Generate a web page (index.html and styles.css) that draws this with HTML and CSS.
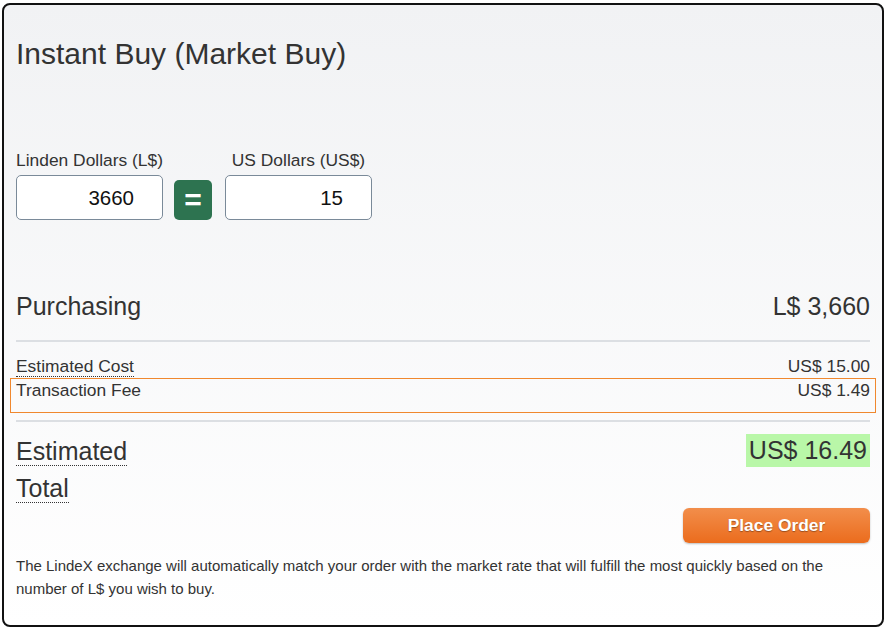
FILE: index.html
```html
<!DOCTYPE html>
<html lang="en">
<head>
  <meta charset="UTF-8">
  <title>Instant Buy</title>
  <meta name="viewport" content="width=device-width, initial-scale=1.0">
  <link rel="stylesheet" href="styles.css">
</head>
<body>
  <div class="panel">
    <h1 class="title">Instant Buy (Market Buy)</h1>

    <div class="converter">
      <div class="field">
        <label for="linden">Linden Dollars (L$)</label>
        <input id="linden" type="text" value="3660">
      </div>
      <button class="equals">=</button>
      <div class="field">
        <label for="usd">US Dollars (US$)</label>
        <input id="usd" type="text" value="15">
      </div>
    </div>

    <div class="row big">
      <span>Purchasing</span>
      <span>L$ 3,660</span>
    </div>
    <hr class="divider">

    <div class="row">
      <span class="hint">Estimated Cost</span>
      <span>US$ 15.00</span>
    </div>
    <div class="row fee">
      <span>Transaction Fee</span>
      <span>US$ 1.49</span>
    </div>
    <hr class="divider">

    <div class="row big total-row">
      <span class="total-label"><span class="hint">Estimated</span><br><span class="hint">Total</span></span>
      <span class="total-value">US$ 16.49</span>
    </div>

    <div class="actions">
      <button class="place-order">Place Order</button>
    </div>

    <p class="note">The LindeX exchange will automatically match your order with the market rate that will fulfill the most quickly based on the number of L$ you wish to buy.</p>
  </div>
</body>
</html>
```

FILE: styles.css
```css
body {
  margin: 0;
  font-family: "Liberation Sans", Arial, sans-serif;
  color: #333;
  background: #fff;
}

.panel {
  box-sizing: border-box;
  width: 882px;
  height: 624px;
  margin: 3px 0 0 2px;
  padding: 0 12px;
  border: 2px solid #111;
  border-radius: 8px;
  background: linear-gradient(#f1f2f4, #ffffff);
}

.title {
  margin: 0;
  padding-top: 30px;
  font-size: 30px;
  font-weight: normal;
  line-height: 38px;
}

.converter {
  display: flex;
  align-items: flex-end;
  gap: 11px;
  margin-top: 78px;
}

.field {
  display: flex;
  flex-direction: column;
  align-items: center;
}

.field label {
  font-size: 17.4px;
  line-height: 18px;
  margin-bottom: 6px;
  white-space: nowrap;
}

.field input {
  box-sizing: border-box;
  width: 147px;
  height: 45px;
  padding: 0 28px 0 8px;
  border: 1px solid #7a8a99;
  border-radius: 5px;
  background: #fff;
  font-family: "Liberation Sans", Arial, sans-serif;
  font-size: 20.5px;
  color: #111;
  text-align: right;
}

.equals {
  width: 38px;
  height: 40px;
  padding: 0;
  border: none;
  border-radius: 5px;
  background: #2d7350;
  color: #fff;
  font-family: "Liberation Sans", Arial, sans-serif;
  font-size: 30px;
  font-weight: bold;
  line-height: 40px;
}

.equals + .field {
  margin-left: 2px;
}

.row {
  display: flex;
  justify-content: space-between;
  font-size: 17.4px;
  line-height: 20px;
}

.row.big {
  font-size: 25px;
  line-height: 30px;
  margin-top: 71px;
}

.divider {
  height: 2px;
  margin: 19px 0 14px;
  border: none;
  background: #dcdfe3;
}

.hint {
  border-bottom: 1px dotted #333;
}

.fee {
  margin: 1px -6px 0;
  padding: 1px 5px 12px;
  border: 1px solid #f0882e;
}

.fee + .divider {
  margin-top: 7px;
}

.total-row.big {
  margin-top: 0;
  align-items: flex-start;
}

.total-label {
  line-height: 37px;
  margin-top: -3px;
}

.total-value {
  margin-top: -2px;
  padding: 1px 3px 2px;
  background: #b9f7a8;
}

.actions {
  display: flex;
  justify-content: flex-end;
  margin-top: 1px;
}

.place-order {
  width: 187px;
  height: 35px;
  border: none;
  border-radius: 6px;
  background: linear-gradient(#f28e4b, #eb6c1d);
  box-shadow: 0 1px 2px rgba(0, 0, 0, 0.25);
  color: #fff;
  font-family: "Liberation Sans", Arial, sans-serif;
  font-size: 17.4px;
  font-weight: bold;
  text-shadow: 0 1px 1px rgba(0, 0, 0, 0.35);
}

.note {
  margin: 11px 0 0;
  font-size: 15px;
  line-height: 23px;
}
```
